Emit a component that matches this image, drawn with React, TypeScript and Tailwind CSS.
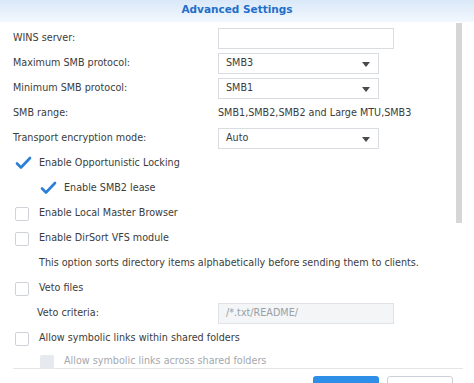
import React from 'react';

const font = { fontFamily: '"DejaVu Sans", Verdana, sans-serif' };

function Arrow() {
  return (
    <svg width="8" height="5" viewBox="0 0 8 5" className="absolute right-[8px] top-[8px]">
      <path d="M0 0 L8 0 L4 5 Z" fill="#4a4a4a" />
    </svg>
  );
}

function Select({ value }: { value: string }) {
  return (
    <div className="relative w-[161px] h-[21px] border border-[#d9dde2] bg-white flex items-center pl-[7px] text-[#3c3c3c]">
      {value}
      <Arrow />
    </div>
  );
}

function Check({ checked, disabled }: { checked?: boolean; disabled?: boolean }) {
  if (disabled) return <div className="w-[14px] h-[14px] rounded-[2px] bg-[#e6eaee]" />;
  if (checked)
    return (
      <div className="relative w-[14px] h-[14px]">
        <svg width="17" height="14" viewBox="0 0 17 14" className="absolute left-[0px] top-[-1px]">
          <path d="M2 7.5 L6 11.5 L15 2" fill="none" stroke="#2b7fd9" strokeWidth="2.6" strokeLinecap="round" strokeLinejoin="round" />
        </svg>
      </div>
    );
  return <div className="w-[14px] h-[14px] rounded-[2px] border border-[#cfd3d8] bg-white" />;
}

function CheckRow({ label, checked, indent, disabled }: { label: string; checked?: boolean; indent?: boolean; disabled?: boolean }) {
  return (
    <div className={`h-[25px] flex items-center gap-[10px] ${indent ? 'pl-[27px]' : 'pl-[2px]'}`}>
      <Check checked={checked} disabled={disabled} />
      <span className={disabled ? 'text-[#a3a8ad]' : 'text-[#3c3c3c]'}>{label}</span>
    </div>
  );
}

function FieldRow({ label, children, indent }: { label: string; children: React.ReactNode; indent?: boolean }) {
  return (
    <div className="h-[25px] flex items-center">
      <div className={`w-[205px] text-[#3c3c3c] ${indent ? 'pl-[24px]' : ''}`}>{label}</div>
      {children}
    </div>
  );
}

export default function App() {
  return (
    <div className="relative w-[474px] h-[383px] overflow-hidden bg-white text-[9.65px]" style={font}>
      {/* Header */}
      <div className="h-[22px] pb-[2px] flex items-center justify-center bg-gradient-to-b from-[#d9e8f8] to-[#f3f8fd]">
        <span className="text-[10.5px] font-bold text-[#1f6fcb]">Advanced Settings</span>
      </div>

      {/* Scrollbar */}
      <div className="absolute left-[456px] top-[23px] w-[6px] h-[200px] bg-[#d6d6d6]" />

      {/* Content */}
      <div className="pl-[13px] pt-[4px]">
        <FieldRow label="WINS server:">
          <div className="w-[176px] h-[21px] border border-[#d9dde2] bg-white" />
        </FieldRow>
        <FieldRow label="Maximum SMB protocol:">
          <Select value="SMB3" />
        </FieldRow>
        <FieldRow label="Minimum SMB protocol:">
          <Select value="SMB1" />
        </FieldRow>
        <FieldRow label="SMB range:">
          <span className="text-[#3c3c3c]">SMB1,SMB2,SMB2 and Large MTU,SMB3</span>
        </FieldRow>
        <FieldRow label="Transport encryption mode:">
          <Select value="Auto" />
        </FieldRow>
        <CheckRow label="Enable Opportunistic Locking" checked />
        <CheckRow label="Enable SMB2 lease" checked indent />
        <CheckRow label="Enable Local Master Browser" />
        <CheckRow label="Enable DirSort VFS module" />
        <div className="h-[25px] flex items-center pl-[26px] text-[#3c3c3c]">
          This option sorts directory items alphabetically before sending them to clients.
        </div>
        <CheckRow label="Veto files" />
        <FieldRow label="Veto criteria:" indent>
          <div className="w-[176px] h-[21px] border border-[#dfe3e8] bg-[#f3f5f7] flex items-center pl-[7px] text-[#9aa0a6]">
            /*.txt/README/
          </div>
        </FieldRow>
        <CheckRow label="Allow symbolic links within shared folders" />
        <div className="h-[19px] overflow-visible">
          <div className="-mt-[2px]">
            <CheckRow label="Allow symbolic links across shared folders" indent disabled />
          </div>
        </div>
      </div>

      {/* Footer */}
      <div className="mx-[13px] mr-[11px] border-t border-[#e6e6e6]" />
      <div className="flex justify-end gap-[8px] pr-[21px] pt-[7px]">
        <div className="w-[66px] h-[24px] rounded-[3px] bg-[#2e8fe8]" />
        <div className="w-[66px] h-[24px] rounded-[3px] border border-[#cdd1d5] bg-white" />
      </div>
    </div>
  );
}
